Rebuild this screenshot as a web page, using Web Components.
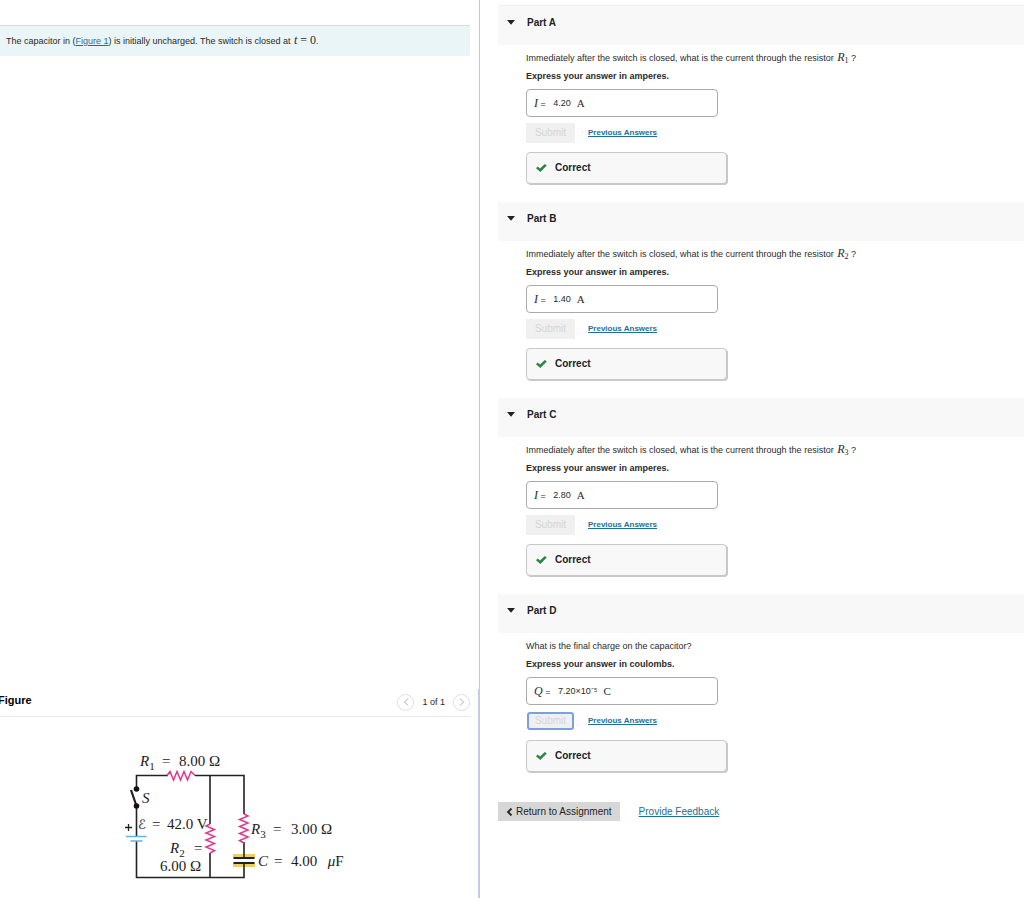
<!DOCTYPE html>
<html lang="en">
<head>
<meta charset="utf-8">
<meta name="viewport" content="width=device-width, initial-scale=1">
<title>Capacitor circuit</title>
<style>
  body {
    margin: 0;
    background: #fff;
    color: #2a2a2a;
    font: 9px/18px "Liberation Sans", Arial, sans-serif;
  }

  a {
    color: #1f6f96;
  }
</style>
</head>
<body>
<problem-page>
  <problem-intro slot="left">The capacitor in (<a href="#figure">Figure 1</a>) is initially uncharged. The switch is closed at <math-text><i>t</i> = 0</math-text>.</problem-intro>
  <figure-viewer slot="left" id="figure" label="Figure" position="1 of 1">
    <circuit-diagram></circuit-diagram>
  </figure-viewer>

  <problem-part name="Part A" symbol="I" value="4.20" unit="A">
    Immediately after the switch is closed, what is the current through the resistor <math-text><i>R</i><sub>1</sub></math-text> ?
    <span slot="hint">Express your answer in amperes.</span>
  </problem-part>
  <problem-part name="Part B" symbol="I" value="1.40" unit="A">
    Immediately after the switch is closed, what is the current through the resistor <math-text><i>R</i><sub>2</sub></math-text> ?
    <span slot="hint">Express your answer in amperes.</span>
  </problem-part>
  <problem-part name="Part C" symbol="I" value="2.80" unit="A">
    Immediately after the switch is closed, what is the current through the resistor <math-text><i>R</i><sub>3</sub></math-text> ?
    <span slot="hint">Express your answer in amperes.</span>
  </problem-part>
  <problem-part name="Part D" symbol="Q" value="7.20×10⁻⁵" unit="C" active>
    What is the final charge on the capacitor?
    <span slot="hint">Express your answer in coulombs.</span>
  </problem-part>
  <page-actions></page-actions>
</problem-page>

<script>
function attach(el, html) {
  const template = document.createElement("template");
  template.innerHTML = html;
  el.attachShadow({ mode: "open" }).appendChild(template.content.cloneNode(true));
}

class ProblemPage extends HTMLElement {
  constructor() {
    super();
    attach(this, /*html*/`
      <style>
        :host {
          display: grid;
          grid-template-columns: 15fr 17fr;
          min-height: 100vh;
        }

        .left {
          display: flex;
          flex-direction: column;
          justify-content: space-between;
          box-sizing: border-box;
          padding-top: 25px;
          background: linear-gradient(#c8c8cc, #c8c8cc) right / 1px 100% no-repeat;
        }

        .right {
          padding: 5px 0 0 18px;
        }
      </style>
      <section class="left"><slot name="left"></slot></section>
      <main class="right"><slot></slot></main>`);
  }
}

class ProblemIntro extends HTMLElement {
  constructor() {
    super();
    attach(this, /*html*/`
      <style>
        :host {
          display: block;
          margin-right: 10px;
          padding: 6px;
          border-top: 1px solid #d3e0e0;
          background: #e9f5f7;
        }
      </style>
      <slot></slot>`);
  }
}

class MathText extends HTMLElement {
  constructor() {
    super();
    attach(this, /*html*/`
      <style>
        :host {
          margin-left: 1px;
          font: 12px/1 "Liberation Serif", "Times New Roman", serif;
        }

        ::slotted(sub) {
          font-size: 8px;
          line-height: 1;
          vertical-align: -2px;
        }
      </style>
      <slot></slot>`);
  }
}

class FigureViewer extends HTMLElement {
  constructor() {
    super();
    attach(this, /*html*/`
      <style>
        :host {
          display: block;
          border-right: 2px solid #c3cde2;
        }

        header {
          display: flex;
          align-items: center;
          gap: 8px;
          margin-right: 8px;
          padding: 2px 0 3px;
          border-bottom: 1px solid #e8e8e8;
        }

        /* the heading runs under the edge of the pane */
        h2 {
          flex: 1;
          margin: 0 0 4px -2px;
          color: #000;
          font-size: 11px;
        }

        button {
          display: flex;
          align-items: center;
          justify-content: center;
          width: 17px;
          height: 17px;
          padding: 0;
          border: 1px solid #dedede;
          border-radius: 50%;
          background: #fff;
        }

        .view {
          display: flex;
          justify-content: center;
          padding: 23px 8px 0 0;
        }
      </style>
      <header>
        <h2></h2>
        <button aria-label="Previous figure" disabled>
          <svg width="6" height="8" viewBox="0 0 6 8" fill="none" stroke="#aaa"><path d="M5 .5 1.5 4 5 7.5"/></svg>
        </button>
        <span></span>
        <button aria-label="Next figure" disabled>
          <svg width="6" height="8" viewBox="0 0 6 8" fill="none" stroke="#aaa"><path d="M1 .5 4.500 4 1 7.500"/></svg>
        </button>
      </header>
      <div class="view"><slot></slot></div>`);
  }

  connectedCallback() {
    this.shadowRoot.querySelector("h2").textContent = this.getAttribute("label");
    this.shadowRoot.querySelector("span").textContent = this.getAttribute("position");
  }
}

class CircuitDiagram extends HTMLElement {
  constructor() {
    super();
    attach(this, /*html*/`
      <style>
        :host {
          display: block;
        }

        svg {
          display: block;
        }

        text {
          fill: #1c1c1c;
          font: 15px "Liberation Serif", "Times New Roman", serif;
        }

        .i {
          font-style: italic;
        }

        .sub {
          font-size: 11px;
          font-style: normal;
        }

        .emf {
          font-family: "DejaVu Sans", sans-serif;
          font-size: 13px;
        }

        .wire {
          fill: none;
          stroke: #222;
          stroke-width: 1.6;
        }

        .resistor {
          fill: none;
          stroke: #e0398c;
          stroke-width: 1.5;
          stroke-linejoin: miter;
        }
      </style>
      <svg width="250" height="158" viewBox="0 0 250 158" role="img" aria-label="Circuit">
        <rect x="123" y="114" width="22" height="13" fill="#f0cd66"/>
        <rect x="123" y="118" width="22" height="5" fill="#fff"/>
        <g class="wire">
          <path d="M26.500 49V35.500H58M85 35.500H134V74M134 102V117M134 123V137.500H26.500V101M26.500 66V96.500"/>
          <path d="M100 35.500V84M100 113V137.500"/>
          <path d="M123.500 118H144.500M123.500 123H144.500" stroke-width="1.8"/>
          <path d="M21 50 26.500 66" stroke-width="2.2"/>
          <path d="M15 87.500H22M18.500 84V91" stroke-width="1.3"/>
        </g>
        <circle cx="26.500" cy="49" r="2.8" fill="#111"/>
        <circle cx="26.500" cy="66" r="2.8" fill="#111"/>
        <path d="M16 96.500H36.500M20.500 101H32.500" stroke="#5bb5e8" stroke-width="1.6"/>
        <g class="resistor">
          <path d="M57 35.500 60 31.500 63.500 40 67 31.500 70.500 40 74 31.500 77.500 40 81 31.500 85 35.500"/>
          <path d="M100 84 96 86 104.500 89.500 96 93 104.500 96.500 96 100 104.500 103.500 96 107 104.500 110.500 100 113"/>
          <path d="M134 74 138 76 129.500 79.500 138 83 129.500 86.500 138 90 129.500 93.500 138 97 129.500 100.500 134 103"/>
        </g>
        <text y="26"><tspan class="i" x="30">R</tspan><tspan class="sub" dy="4">1</tspan><tspan x="52" dy="-4">=</tspan><tspan x="69">8.00 Ω</tspan></text>
        <text class="i" x="32" y="63">S</text>
        <text y="89"><tspan class="emf" x="28">ℰ</tspan><tspan x="42">=</tspan><tspan x="57">42.0 V</tspan></text>
        <text y="113"><tspan class="i" x="60">R</tspan><tspan class="sub" dy="4">2</tspan><tspan x="84" dy="-4">=</tspan></text>
        <text x="50" y="131">6.00 Ω</text>
        <text y="94"><tspan class="i" x="141">R</tspan><tspan class="sub" dy="4">3</tspan><tspan x="163" dy="-4">=</tspan><tspan x="181">3.00 Ω</tspan></text>
        <text y="126"><tspan class="i" x="148">C</tspan><tspan x="164">=</tspan><tspan x="181">4.00</tspan><tspan class="i" x="214"> μ</tspan>F</text>
      </svg>`);
  }
}

class ProblemPart extends HTMLElement {
  constructor() {
    super();
    attach(this, /*html*/`
      <style>
        :host {
          display: block;
        }

        :host(:first-of-type) header {
          border-top: 1px solid #f0f0f0;
        }

        header {
          background: #f8f8f8;
        }

        h2 {
          margin: 0;
          font-size: 10px;
        }

        h2 button {
          display: flex;
          align-items: center;
          gap: 12px;
          width: 100%;
          height: 39px;
          padding: 0 9px 6px;
          border: 0;
          background: none;
          color: #222;
          font: inherit;
        }

        .body {
          padding: 4px 12px 18px 28px;
        }

        p {
          margin: 0;
        }

        .hint {
          font-weight: bold;
        }

        .answer {
          display: flex;
          align-items: center;
          box-sizing: border-box;
          max-width: 192px;
          height: 28px;
          margin-top: 4px;
          padding: 0 7px;
          border: 1px solid #aaa;
          border-radius: 4px;
          background: #fff;
        }

        label {
          margin-right: 5px;
          white-space: pre;
        }

        .symbol,
        .unit {
          font-family: "Liberation Serif", "Times New Roman", serif;
          font-size: 12px;
        }

        .symbol {
          font-style: italic;
        }

        input {
          field-sizing: content;
          margin-right: 6px;
          padding: 0;
          border: 0;
          outline: 0;
          background: none;
          color: inherit;
          font: inherit;
        }

        .unit {
          font-size: 11px;
        }

        .actions {
          display: flex;
          align-items: center;
          gap: 13px;
          margin: 6px 0 9px;
        }

        .submit {
          width: 49px;
          height: 20px;
          padding: 0;
          border: 1px solid #f0f0f0;
          background: #f0f0f0;
          color: #d5d5d5;
          font: inherit;
          font-size: 10px;
          line-height: 12px;
        }

        :host([active]) .submit {
          width: 47px;
          height: 18px;
          margin: 1px;
          border: 2px solid #7f9fdc;
          border-radius: 3px;
        }

        a {
          color: #1f6f96;
          font-size: 8px;
          font-weight: bold;
        }

        .result {
          display: flex;
          align-items: center;
          gap: 8px;
          box-sizing: border-box;
          max-width: 201px;
          height: 32px;
          padding: 0 9px;
          border: 1px solid #c8c8c8;
          border-radius: 4px;
          background: #f8f8f8;
          box-shadow: 1px 1px 0 #c8c8c8;
          color: #222;
          font-size: 10px;
          font-weight: bold;
        }
      </style>
      <header>
        <h2>
          <button aria-expanded="true">
            <svg width="8" height="5" viewBox="0 0 8 5"><path d="M0 0H8L4 4.800Z" fill="#222"/></svg>
            <span class="name"></span>
          </button>
        </h2>
      </header>
      <div class="body">
        <p><slot></slot></p>
        <p class="hint"><slot name="hint"></slot></p>
        <div class="answer">
          <label for="value"><span class="symbol"></span> = </label>
          <input id="value" readonly>
          <span class="unit"></span>
        </div>
        <div class="actions">
          <button class="submit" disabled>Submit</button>
          <a href="#previous">Previous Answers</a>
        </div>
        <div class="result" role="status">
          <svg width="11" height="8" viewBox="0 0 11 8"><path d="M0 4.300 1.800 2.600 4 4.500 8.800 0 10.800 1.400 4.300 8Z" fill="#2c8540"/></svg>
          <span>Correct</span>
        </div>
      </div>`);
  }

  connectedCallback() {
    this.shadowRoot.querySelector(".name").textContent = this.getAttribute("name");
    this.shadowRoot.querySelector(".symbol").textContent = this.getAttribute("symbol");
    this.shadowRoot.querySelector(".unit").textContent = this.getAttribute("unit");
    this.shadowRoot.querySelector("input").value = this.getAttribute("value");
  }
}

class PageActions extends HTMLElement {
  constructor() {
    super();
    attach(this, /*html*/`
      <style>
        :host {
          display: flex;
          align-items: center;
          gap: 19px;
          padding: 12px 0;
          font-size: 10px;
        }

        button {
          display: flex;
          align-items: center;
          gap: 3px;
          height: 19px;
          padding: 0 8px;
          border: 0;
          background: #d7d7d7;
          color: #222;
          font: inherit;
        }

        a {
          color: #1f6f96;
        }
      </style>
      <button>
        <svg width="7" height="8" viewBox="0 0 7 8" fill="none" stroke="#222" stroke-width="1.8"><path d="M5.500 .5 2 4 5.500 7.500"/></svg>
        <span>Return to Assignment</span>
      </button>
      <a href="#feedback">Provide Feedback</a>`);
  }
}

customElements.define("math-text", MathText);
customElements.define("problem-intro", ProblemIntro);
customElements.define("circuit-diagram", CircuitDiagram);
customElements.define("figure-viewer", FigureViewer);
customElements.define("problem-part", ProblemPart);
customElements.define("page-actions", PageActions);
customElements.define("problem-page", ProblemPage);
</script>
</body>
</html>
